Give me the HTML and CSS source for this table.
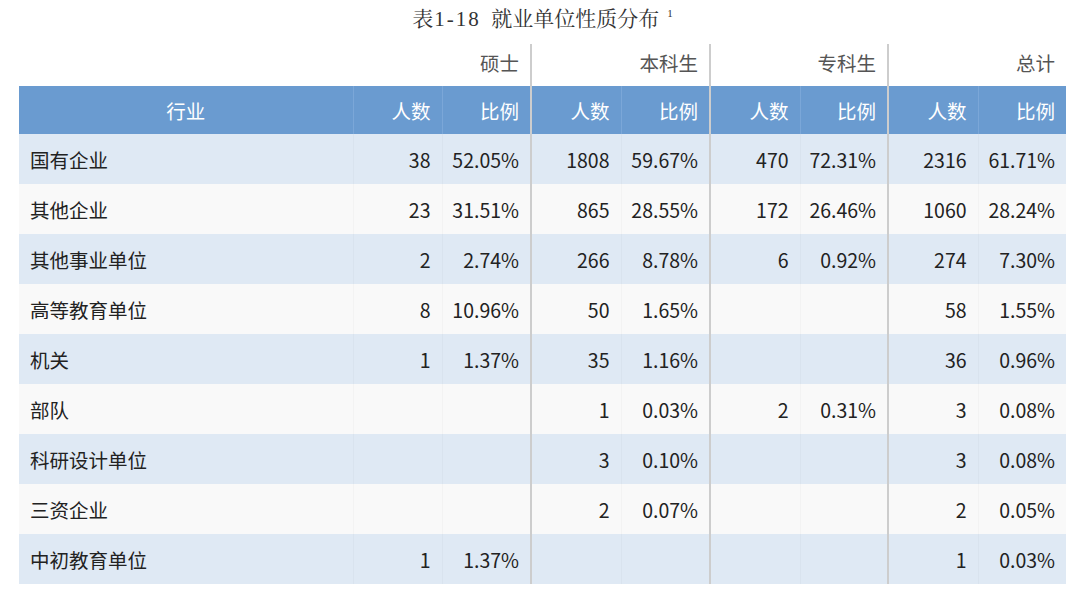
FILE: index.html
```html
<!DOCTYPE html>
<html lang="zh-CN">
<head>
<meta charset="utf-8">
<link rel="stylesheet" href="styles.css">
</head>
<body>
<div class="wrap">
  <div class="title">表<span class="num">1-18</span>&nbsp; 就业单位性质分布<sup class="note">1</sup></div>
  <table class="tbl">
    <colgroup>
      <col class="c-name">
      <col class="c-n1"><col class="c-p1">
      <col class="c-n2"><col class="c-p2">
      <col class="c-n3"><col class="c-p3">
      <col class="c-n4"><col class="c-p4">
    </colgroup>
    <thead>
      <tr class="group">
        <th></th>
        <th colspan="2">硕士</th>
        <th colspan="2" class="sep">本科生</th>
        <th colspan="2" class="sep">专科生</th>
        <th colspan="2" class="sep">总计</th>
      </tr>
      <tr class="head">
        <th class="name">行业</th>
        <th>人数</th><th>比例</th>
        <th class="sep">人数</th><th>比例</th>
        <th class="sep">人数</th><th>比例</th>
        <th class="sep">人数</th><th>比例</th>
      </tr>
    </thead>
    <tbody>
      <tr class="odd"><td class="name">国有企业</td><td>38</td><td>52.05%</td><td class="sep">1808</td><td>59.67%</td><td class="sep">470</td><td>72.31%</td><td class="sep">2316</td><td>61.71%</td></tr>
      <tr class="even"><td class="name">其他企业</td><td>23</td><td>31.51%</td><td class="sep">865</td><td>28.55%</td><td class="sep">172</td><td>26.46%</td><td class="sep">1060</td><td>28.24%</td></tr>
      <tr class="odd"><td class="name">其他事业单位</td><td>2</td><td>2.74%</td><td class="sep">266</td><td>8.78%</td><td class="sep">6</td><td>0.92%</td><td class="sep">274</td><td>7.30%</td></tr>
      <tr class="even"><td class="name">高等教育单位</td><td>8</td><td>10.96%</td><td class="sep">50</td><td>1.65%</td><td class="sep"></td><td></td><td class="sep">58</td><td>1.55%</td></tr>
      <tr class="odd"><td class="name">机关</td><td>1</td><td>1.37%</td><td class="sep">35</td><td>1.16%</td><td class="sep"></td><td></td><td class="sep">36</td><td>0.96%</td></tr>
      <tr class="even"><td class="name">部队</td><td></td><td></td><td class="sep">1</td><td>0.03%</td><td class="sep">2</td><td>0.31%</td><td class="sep">3</td><td>0.08%</td></tr>
      <tr class="odd"><td class="name">科研设计单位</td><td></td><td></td><td class="sep">3</td><td>0.10%</td><td class="sep"></td><td></td><td class="sep">3</td><td>0.08%</td></tr>
      <tr class="even"><td class="name">三资企业</td><td></td><td></td><td class="sep">2</td><td>0.07%</td><td class="sep"></td><td></td><td class="sep">2</td><td>0.05%</td></tr>
      <tr class="odd"><td class="name">中初教育单位</td><td>1</td><td>1.37%</td><td class="sep"></td><td></td><td class="sep"></td><td></td><td class="sep">1</td><td>0.03%</td></tr>
    </tbody>
  </table>
</div>
</body>
</html>
```

FILE: styles.css
```css
html, body {
  margin: 0;
  padding: 0;
  background: #ffffff;
}

body {
  font-family: "Noto Sans CJK SC", "Noto Sans", sans-serif;
  color: #222;
}

.wrap {
  width: 1047px;
  margin-left: 19px;
}

.title {
  height: 44px;
  line-height: 38px;
  text-align: center;
  font-family: "Liberation Serif", "Noto Serif CJK SC", "Noto Sans CJK SC", serif;
  font-size: 21px;
  color: #333;
}

.title .num {
  letter-spacing: 2px;
  margin-left: 1px;
}

.note {
  font-size: 11px;
  vertical-align: 9px;
  line-height: 0;
  margin-left: 8px;
}

.tbl {
  width: 1047px;
  border-collapse: collapse;
  table-layout: fixed;
  font-size: 19.5px;
}

.c-name { width: 334px; }
.c-n1 { width: 89px; }
.c-p1 { width: 89px; }
.c-n2 { width: 90px; }
.c-p2 { width: 89px; }
.c-n3 { width: 90px; }
.c-p3 { width: 88px; }
.c-n4 { width: 90px; }
.c-p4 { width: 88px; }

.tbl th, .tbl td {
  padding: 0 11px 0 0;
  text-align: right;
  font-weight: normal;
  white-space: nowrap;
}

.group th {
  height: 42px;
  padding-bottom: 6px;
  box-sizing: border-box;
  color: #555;
  background: #fff;
}

.head th {
  height: 48px;
  background: #6a9bd0;
  color: #fff;
  border-left: 1px solid #7ba7d8;
}

.head th.name {
  text-align: center;
  padding: 0;
  border-left: none;
}

.tbl td {
  height: 50px;
  border-left: 1px solid rgba(0, 0, 0, 0.025);
}

.tbl td.name {
  text-align: left;
  padding: 0 0 0 11px;
  border-left: none;
}

.odd td { background: #dfe9f4; }
.even td { background: #f9f9f9; }

.tbl .sep {
  border-left: 2px solid #cdcdcd;
}
```
